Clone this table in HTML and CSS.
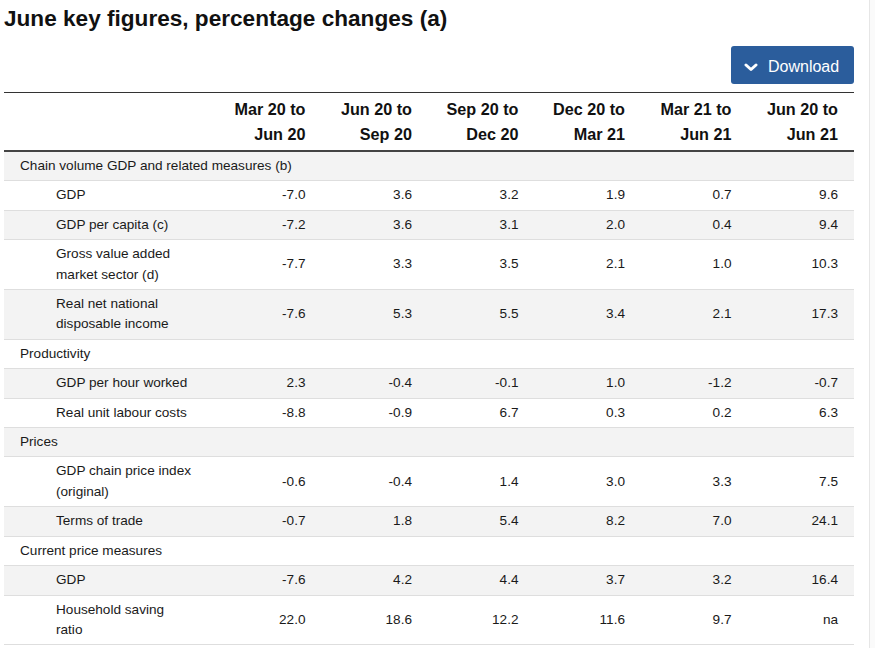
FILE: index.html
```html
<!DOCTYPE html>
<html lang="en">
<head>
<meta charset="utf-8">
<title>June key figures</title>
<link rel="stylesheet" href="styles.css">
</head>
<body>
<div class="page">
  <main class="content">
    <h1 class="title">June key figures, percentage changes (a)</h1>
    <div class="toolbar">
      <button class="btn-download" type="button">
        <svg class="chev" width="14" height="9" viewBox="0 0 14 9" aria-hidden="true"><path d="M2 2 L7 6.5 L12 2" fill="none" stroke="#fff" stroke-width="3" stroke-linecap="round" stroke-linejoin="round"/></svg>
        <span>Download</span>
      </button>
    </div>
    <table class="figures">
      <colgroup>
        <col class="c-label">
        <col><col><col><col><col><col>
      </colgroup>
      <thead>
        <tr>
          <th></th>
          <th>Mar 20 to<br>Jun 20</th>
          <th>Jun 20 to<br>Sep 20</th>
          <th>Sep 20 to<br>Dec 20</th>
          <th>Dec 20 to<br>Mar 21</th>
          <th>Mar 21 to<br>Jun 21</th>
          <th>Jun 20 to<br>Jun 21</th>
        </tr>
      </thead>
      <tbody>
        <tr class="section"><td colspan="7">Chain volume GDP and related measures (b)</td></tr>
        <tr><td class="lbl">GDP</td><td>-7.0</td><td>3.6</td><td>3.2</td><td>1.9</td><td>0.7</td><td>9.6</td></tr>
        <tr><td class="lbl">GDP per capita (c)</td><td>-7.2</td><td>3.6</td><td>3.1</td><td>2.0</td><td>0.4</td><td>9.4</td></tr>
        <tr><td class="lbl">Gross value added market sector (d)</td><td>-7.7</td><td>3.3</td><td>3.5</td><td>2.1</td><td>1.0</td><td>10.3</td></tr>
        <tr><td class="lbl">Real net national disposable income</td><td>-7.6</td><td>5.3</td><td>5.5</td><td>3.4</td><td>2.1</td><td>17.3</td></tr>
        <tr class="section"><td colspan="7">Productivity</td></tr>
        <tr><td class="lbl">GDP per hour worked</td><td>2.3</td><td>-0.4</td><td>-0.1</td><td>1.0</td><td>-1.2</td><td>-0.7</td></tr>
        <tr><td class="lbl">Real unit labour costs</td><td>-8.8</td><td>-0.9</td><td>6.7</td><td>0.3</td><td>0.2</td><td>6.3</td></tr>
        <tr class="section"><td colspan="7">Prices</td></tr>
        <tr><td class="lbl">GDP chain price index (original)</td><td>-0.6</td><td>-0.4</td><td>1.4</td><td>3.0</td><td>3.3</td><td>7.5</td></tr>
        <tr><td class="lbl">Terms of trade</td><td>-0.7</td><td>1.8</td><td>5.4</td><td>8.2</td><td>7.0</td><td>24.1</td></tr>
        <tr class="section"><td colspan="7">Current price measures</td></tr>
        <tr><td class="lbl">GDP</td><td>-7.6</td><td>4.2</td><td>4.4</td><td>3.7</td><td>3.2</td><td>16.4</td></tr>
        <tr><td class="lbl">Household saving ratio</td><td>22.0</td><td>18.6</td><td>12.2</td><td>11.6</td><td>9.7</td><td>na</td></tr>
      </tbody>
    </table>
  </main>
  <div class="track"></div>
</div>
</body>
</html>
```

FILE: styles.css
```css
html, body {
  margin: 0;
  padding: 0;
  background: #fff;
}
body {
  font-family: "Liberation Sans", Arial, sans-serif;
  color: #1a1a1a;
  overflow: hidden;
}
.page {
  display: flex;
  height: 648px;
}
.content {
  width: 850px;
  padding-left: 4px;
  flex: none;
}
.track {
  margin-left: auto;
  width: 5px;
  border-left: 1px solid #e6e6e6;
  background: #fafafa;
}
.title {
  margin: 0;
  padding-top: 5px;
  font-size: 22.6px;
  line-height: 28px;
  font-weight: 700;
  color: #111;
}
.toolbar {
  display: flex;
  justify-content: flex-end;
  margin-top: 13px;
}
.btn-download {
  display: flex;
  align-items: center;
  gap: 10px;
  height: 38px;
  width: 123px;
  padding: 4px 0 0 13px;
  border: 0;
  border-radius: 3px;
  background: #2b5d9c;
  color: #fff;
  font-family: "Liberation Sans", Arial, sans-serif;
  font-size: 16px;
}
.chev { flex: none; }
.figures {
  width: 850px;
  margin-top: 8px;
  border-collapse: collapse;
  table-layout: fixed;
  font-size: 13.6px;
  line-height: 20.4px;
}
.c-label { width: 211px; }
.figures thead th {
  border-top: 1px solid #333;
  border-bottom: 2px solid #444;
  padding: 4px 16px 4px 0;
  text-align: right;
  font-size: 16.2px;
  font-weight: 700;
  line-height: 24.5px;
  color: #111;
}
.figures td {
  padding: 4px 16px 4px 0;
  text-align: right;
  border-bottom: 1px solid #dedede;
  vertical-align: middle;
}
.figures tbody tr:nth-child(odd) { background: #f3f3f3; }
.figures td.lbl {
  text-align: left;
  padding-left: 52px;
  padding-right: 23px;
}
.figures tr.section td {
  text-align: left;
  padding-left: 16px;
}
```
